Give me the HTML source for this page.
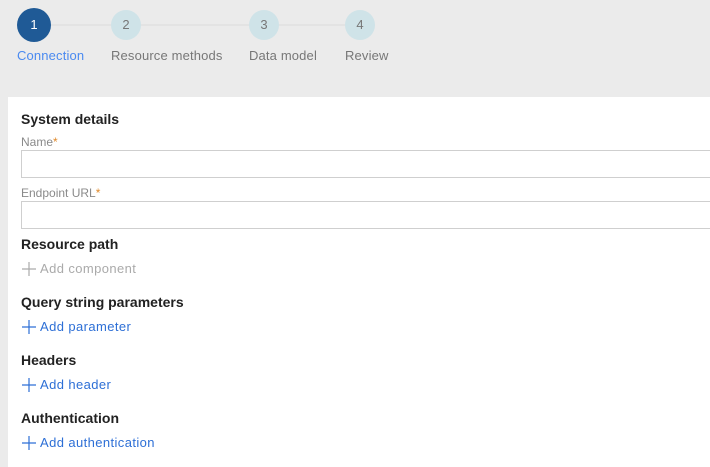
<!DOCTYPE html>
<html><head><style>
body{margin:0;width:710px;height:455px;background:#ebebeb;font-family:"Liberation Sans",sans-serif;position:relative;overflow:hidden}
.line{position:absolute;top:24px;height:2px;background:#e3e3e3}
.c{position:absolute;border-radius:50%;text-align:center;font-size:13px}
.c1{left:17px;top:8px;width:34px;height:34px;line-height:34px;background:#1f5a96;color:#fff}
.cn{width:30px;height:30px;line-height:30px;top:10px;background:#cfe3e8;color:#777}
.lbl{position:absolute;top:48px;font-size:13px;color:#777;letter-spacing:0.15px}
.panel{position:absolute;left:8px;top:97px;width:710px;height:370px;background:#fff}
.h{position:absolute;left:21px;font-size:14px;font-weight:bold;color:#222}
.f{position:absolute;left:21px;font-size:12px;color:#8a8a8a}
.f b{color:#e08a2c;font-weight:normal}
.in{position:absolute;left:21px;width:700px;height:26px;border:1px solid #cfcfcf;background:#fff}
.a{position:absolute;left:40px;font-size:13px;color:#2d6fd6;letter-spacing:0.4px}
.a svg{position:absolute;left:-18px;top:1px}
</style></head><body>
<div class="line" style="left:51px;width:295px"></div>
<div class="c c1">1</div>
<div class="c cn" style="left:111px">2</div>
<div class="c cn" style="left:249px">3</div>
<div class="c cn" style="left:345px">4</div>
<div class="lbl" style="left:17px;color:#4a8af0">Connection</div>
<div class="lbl" style="left:111px">Resource methods</div>
<div class="lbl" style="left:249px">Data model</div>
<div class="lbl" style="left:345px">Review</div>
<div class="panel"></div>
<div class="h" style="top:111px">System details</div>
<div class="f" style="top:135px">Name<b>*</b></div>
<div class="in" style="top:150px"></div>
<div class="f" style="top:186px">Endpoint URL<b>*</b></div>
<div class="in" style="top:201px"></div>
<div class="h" style="top:236px">Resource path</div>
<div class="a" style="top:261px;color:#aaa"><svg width="14" height="14"><path d="M7 0V14M0 7H14" stroke="#aaa" stroke-width="1.2"/></svg>Add component</div>
<div class="h" style="top:294px">Query string parameters</div>
<div class="a" style="top:319px"><svg width="14" height="14"><path d="M7 0V14M0 7H14" stroke="#2d6fd6" stroke-width="1.2"/></svg>Add parameter</div>
<div class="h" style="top:352px">Headers</div>
<div class="a" style="top:377px"><svg width="14" height="14"><path d="M7 0V14M0 7H14" stroke="#2d6fd6" stroke-width="1.2"/></svg>Add header</div>
<div class="h" style="top:410px">Authentication</div>
<div class="a" style="top:435px"><svg width="14" height="14"><path d="M7 0V14M0 7H14" stroke="#2d6fd6" stroke-width="1.2"/></svg>Add authentication</div>
</body></html>
